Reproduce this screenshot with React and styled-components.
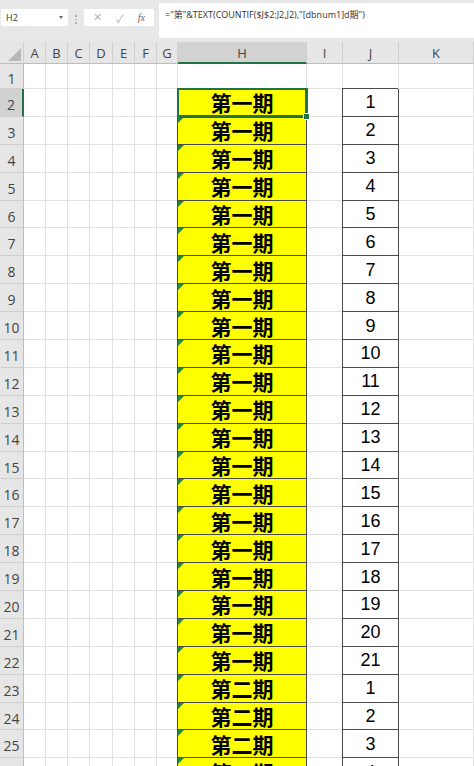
import React from "react";
import styled, { createGlobalStyle, css } from "styled-components";

const GlobalStyle = createGlobalStyle`
  html, body {
    margin: 0;
    padding: 0;
    background: #ffffff;
    overflow: hidden;
  }
  body {
    width: 474px;
    height: 766px;
    font-family: "Liberation Sans", "Noto Sans CJK SC", sans-serif;
  }
`;

const Page = styled.div`
  width: 474px;
  height: 766px;
  overflow: hidden;
  background: #e8e8e8;
`;

const Toolbar = styled.div`
  height: 40px;
  display: flex;
  align-items: flex-start;
  padding: 3px 0 0 1px;
  box-sizing: border-box;
`;

const NameBox = styled.div`
  margin-top: 6px;
  width: 67px;
  height: 17px;
  background: #fff;
  display: flex;
  align-items: center;
  justify-content: space-between;
  padding: 0 5px 0 5px;
  box-sizing: border-box;
  font-family: "Open Sans", sans-serif;
  font-size: 9px;
  color: #333;
`;

const Caret = styled.span`
  width: 0;
  height: 0;
  border-left: 2.5px solid transparent;
  border-right: 2.5px solid transparent;
  border-top: 3px solid #666;
`;

const Grip = styled.div`
  width: 4px;
  margin: 12px 6px 0 6px;
  display: flex;
  flex-direction: column;
  align-items: center;
  gap: 2px;
  span {
    width: 1.5px;
    height: 1.5px;
    background: #b0b0b0;
  }
`;

const ActionBox = styled.div`
  margin-top: 6px;
  width: 70px;
  height: 17px;
  background: #fff;
  display: flex;
  align-items: center;
  justify-content: space-around;
  padding: 0 2px;
  box-sizing: border-box;
  color: #b5b5b5;
  font-size: 11px;
`;

const Fx = styled.span`
  font-family: "Liberation Serif", serif;
  font-style: italic;
  font-size: 10px;
  color: #666;
`;

const FormulaBox = styled.div`
  margin-left: 5px;
  flex: 1;
  height: 35px;
  background: #fff;
  padding: 5px 0 0 6px;
  box-sizing: border-box;
  font-family: "Open Sans", "Noto Sans CJK SC", sans-serif;
  font-size: 9px;
  color: #333;
  white-space: nowrap;
  overflow: hidden;
`;

const Sheet = styled.div`
  margin-top: 2px;
  display: grid;
  grid-template-columns: 24px 22px 22px 22px 23px 22px 22px 21px 129px 36px 56px 1fr;
  grid-template-rows: 22px 25px repeat(25, 27.9px);
  background: #fff;
`;

const headerBase = css`
  background: #e6e6e6;
  color: #444;
  font-family: "Open Sans", sans-serif;
  display: flex;
  align-items: center;
  justify-content: center;
  box-sizing: border-box;
`;

const Corner = styled.div`
  ${headerBase};
  border-right: 1px solid #cfcfcf;
  border-bottom: 1px solid #bdbdbd;
  align-items: flex-end;
  justify-content: flex-end;
  padding: 0 2px 2px 0;
  &::before {
    content: "";
    width: 0;
    height: 0;
    border-left: 13px solid transparent;
    border-bottom: 13px solid #b9b9b9;
  }
`;

const ColHeader = styled.div`
  ${headerBase};
  font-size: 13px;
  border-right: 1px solid #cfcfcf;
  border-bottom: ${(p) => (p.$active ? "2px solid #217346" : "1px solid #bdbdbd")};
  background: ${(p) => (p.$active ? "#d2d2d2" : "#e6e6e6")};
  padding-top: 1px;
`;

const RowHeader = styled.div`
  ${headerBase};
  font-size: 14px;
  border-bottom: 1px solid #cfcfcf;
  border-right: ${(p) => (p.$active ? "2px solid #217346" : "1px solid #bdbdbd")};
  background: ${(p) => (p.$active ? "#d2d2d2" : "#e6e6e6")};
  padding-top: 4px;
`;

const Cell = styled.div`
  box-sizing: border-box;
  border-right: 1px solid #e1e1e1;
  border-bottom: 1px solid #e1e1e1;
`;

const DataCell = styled.div`
  position: relative;
  z-index: 1;
  box-sizing: border-box;
  border-right: 1px solid #4a4a4a;
  border-bottom: 1px solid #4a4a4a;
  box-shadow: -1px -1px 0 0 #4a4a4a;
  display: flex;
  align-items: center;
  justify-content: center;
  color: #000;
  background: ${(p) => (p.$fill ? "#ffff00" : "#fff")};
  font-family: ${(p) =>
    p.$label ? `"Noto Sans CJK SC", sans-serif` : `"Liberation Sans", sans-serif`};
  font-size: ${(p) => (p.$label ? "21px" : "18px")};
  font-weight: ${(p) => (p.$label ? 700 : 400)};
  padding-top: ${(p) => (p.$label ? "0" : "1px")};
  ${(p) =>
    p.$flag &&
    css`
      &::before {
        content: "";
        position: absolute;
        left: 0;
        top: 0;
        border-top: 6px solid #1f8a3a;
        border-right: 6px solid transparent;
      }
    `}
  ${(p) =>
    p.$selected &&
    css`
      z-index: 2;
      box-shadow: 0 0 0 1px #217346, inset 0 0 0 1px #217346;
      border-color: #217346;
      &::after {
        content: "";
        position: absolute;
        right: -4px;
        bottom: -4px;
        width: 5px;
        height: 5px;
        background: #217346;
        border: 1px solid #fff;
      }
    `}
`;

const columns = ["A", "B", "C", "D", "E", "F", "G", "H", "I", "J", "K"];

const numbers = [
  1, 2, 3, 4, 5, 6, 7, 8, 9, 10, 11, 12, 13, 14, 15, 16, 17, 18, 19, 20, 21, 1, 2, 3, 4,
];

function labelFor(index) {
  return index < 21 ? "第一期" : "第二期";
}

export default function App() {
  const rows = [];
  for (let r = 1; r <= 26; r++) {
    rows.push(
      <RowHeader key={`rh${r}`} $active={r === 2}>
        {r}
      </RowHeader>
    );
    columns.forEach((c) => {
      const key = `${c}${r}`;
      if (r >= 2 && c === "H") {
        rows.push(
          <DataCell key={key} $fill $label $selected={r === 2} $flag={r > 2}>
            {labelFor(r - 2)}
          </DataCell>
        );
      } else if (r >= 2 && c === "J") {
        rows.push(<DataCell key={key}>{numbers[r - 2]}</DataCell>);
      } else {
        rows.push(<Cell key={key} />);
      }
    });
  }

  return (
    <Page>
      <GlobalStyle />
      <Toolbar>
        <NameBox>
          H2
          <Caret />
        </NameBox>
        <Grip>
          <span />
          <span />
          <span />
        </Grip>
        <ActionBox>
          <span>✕</span>
          <span>✓</span>
          <Fx>fx</Fx>
        </ActionBox>
        <FormulaBox>="第"&amp;TEXT(COUNTIF($J$2:J2,J2),"[dbnum1]d期")</FormulaBox>
      </Toolbar>
      <Sheet>
        <Corner />
        {columns.map((c) => (
          <ColHeader key={c} $active={c === "H"}>
            {c}
          </ColHeader>
        ))}
        {rows}
      </Sheet>
    </Page>
  );
}
